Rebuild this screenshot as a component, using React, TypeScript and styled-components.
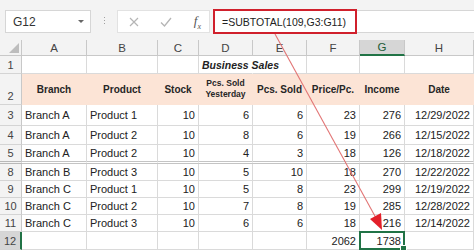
import React from "react";
import styled, { createGlobalStyle } from "styled-components";

const GlobalStyle = createGlobalStyle`
  body {
    margin: 0;
    background: #fff;
    font-family: "Liberation Sans", Arial, sans-serif;
  }
`;

const GREEN = "#217346";
const GRID = "#dadada";

const Page = styled.div`
  position: relative;
  width: 474px;
  height: 250px;
  overflow: hidden;
  background: #fff;
  color: #222;
`;

const Toolbar = styled.div`
  display: flex;
  align-items: flex-start;
  height: 40px;
  padding-top: 10px;
  box-sizing: border-box;
  background: #f3f3f3;
`;

const NameBox = styled.div`
  display: flex;
  align-items: center;
  justify-content: space-between;
  margin-left: 5px;
  width: 86px;
  height: 23px;
  box-sizing: border-box;
  padding: 0 6px 0 7px;
  background: #fff;
  border: 1px solid #d6d6d6;
  font-size: 12px;
  color: #333;
`;

const Caret = styled.span`
  width: 0;
  height: 0;
  border-left: 3px solid transparent;
  border-right: 3px solid transparent;
  border-top: 3px solid #666;
`;

const Grip = styled.div`
  width: 26px;
  display: flex;
  flex-direction: column;
  align-items: center;
  gap: 2px;
  padding-top: 7px;

  span {
    width: 1px;
    height: 1px;
    background: #a0a0a0;
  }
`;

const FxBox = styled.div`
  display: flex;
  align-items: center;
  justify-content: space-between;
  width: 93px;
  height: 23px;
  box-sizing: border-box;
  padding: 0 8px 0 11px;
  background: #fff;
  border: 1px solid #e2e2e2;
`;

const FxLabel = styled.span`
  font-family: "Liberation Serif", serif;
  font-style: italic;
  font-size: 13px;
  color: #555;

  sub {
    font-size: 8px;
  }
`;

const FormulaInput = styled.div`
  flex: 1;
  display: flex;
  margin-left: 3px;
  height: 23px;
  box-sizing: border-box;
  background: #fff;
  border: 1px solid #d6d6d6;
  border-right: none;
`;

const FormulaText = styled.span`
  display: inline-flex;
  align-items: center;
  height: 25px;
  box-sizing: border-box;
  margin: -2px 0 0 -1px;
  padding: 0 9px 0 7px;
  border: 2.5px solid #d0202c;
  font-size: 10.5px;
  color: #222;
`;

const Sheet = styled.div`
  display: grid;
  grid-template-columns: 22px 65px 71px 41px 54px 54px 53px 45px 69px;
  grid-template-rows: 16px 18px 31px 21px 19px 19px 17px 17px 17px 17px 18px;
  font-size: 11px;
`;

const Corner = styled.div`
  display: flex;
  align-items: flex-end;
  justify-content: flex-end;
  padding: 0 2px 2px 0;
  background: #f3f3f3;
  border-right: 1px solid #c8c8c8;
  border-bottom: 1px solid #c8c8c8;
  box-sizing: border-box;

  span {
    width: 0;
    height: 0;
    border-left: 10px solid transparent;
    border-bottom: 10px solid #bdbdbd;
  }
`;

const ColHead = styled.div<{ $active?: boolean }>`
  display: flex;
  align-items: center;
  justify-content: center;
  box-sizing: border-box;
  background: ${(p) => (p.$active ? "#d6d6d6" : "#f3f3f3")};
  color: ${(p) => (p.$active ? "#1d5c38" : "#444")};
  border-right: 1px solid #c8c8c8;
  border-bottom: ${(p) => (p.$active ? `2px solid ${GREEN}` : "1px solid #c8c8c8")};
  font-size: 11.5px;
`;

const RowHead = styled.div<{ $active?: boolean; $hiddenBelow?: boolean; $bottom?: boolean }>`
  display: flex;
  align-items: ${(p) => (p.$bottom ? "flex-end" : "center")};
  justify-content: center;
  padding-bottom: ${(p) => (p.$bottom ? "2px" : "0")};
  box-sizing: border-box;
  background: ${(p) => (p.$active ? "#d6d6d6" : "#f3f3f3")};
  color: #444;
  border-right: ${(p) => (p.$active ? `2px solid ${GREEN}` : "1px solid #c8c8c8")};
  border-bottom: ${(p) => (p.$hiddenBelow ? "3px double #b8b8b8" : "1px solid #d4d4d4")};
`;

const Cell = styled.div<{
  $align?: "left" | "right" | "center";
  $fill?: string;
  $spill?: boolean;
  $hiddenBelow?: boolean;
}>`
  display: flex;
  align-items: center;
  justify-content: ${(p) =>
    p.$align === "right" ? "flex-end" : p.$align === "center" ? "center" : "flex-start"};
  padding: 0 3px;
  box-sizing: border-box;
  white-space: nowrap;
  background: ${(p) => p.$fill ?? "transparent"};
  border-right: 1px solid ${(p) => (p.$spill ? "transparent" : p.$fill ?? GRID)};
  border-bottom: ${(p) => (p.$hiddenBelow ? "3px double #c4c4c4" : `1px solid ${p.$fill ?? GRID}`)};
`;

const HeadCell = styled(Cell)`
  font-weight: bold;
  font-size: 10px;
  color: #262626;
  text-align: center;
  line-height: 11px;
`;

const SmallHead = styled.span`
  font-size: 8.5px;
  line-height: 11px;
`;

const Title = styled.span`
  font-weight: bold;
  font-style: italic;
  font-size: 10.5px;
`;

const Selected = styled(Cell)`
  position: relative;

  &::after {
    content: "";
    position: absolute;
    inset: -1px -1px -1px -1px;
    border: 2px solid ${GREEN};
  }

  &::before {
    content: "";
    position: absolute;
    right: -3px;
    bottom: -3px;
    width: 5px;
    height: 5px;
    background: ${GREEN};
    border: 1px solid #fff;
    z-index: 1;
  }
`;

const Arrow = styled.svg`
  position: absolute;
  left: 0;
  top: 0;
  pointer-events: none;
`;

const PEACH = "#fce4d6";
const letters = ["A", "B", "C", "D", "E", "F", "G", "H"];
const aligns: ("left" | "right")[] = ["left", "left", "right", "right", "right", "right", "right", "right"];

const rows = [
  { n: "3", v: ["Branch A", "Product 1", "10", "6", "6", "23", "276", "12/29/2022"] },
  { n: "4", v: ["Branch A", "Product 2", "10", "8", "6", "19", "266", "12/15/2022"] },
  { n: "5", v: ["Branch A", "Product 2", "10", "4", "3", "18", "126", "12/18/2022"], hidden: true },
  { n: "8", v: ["Branch B", "Product 3", "10", "5", "10", "18", "270", "12/22/2022"] },
  { n: "9", v: ["Branch C", "Product 1", "10", "5", "8", "23", "299", "12/19/2022"] },
  { n: "10", v: ["Branch C", "Product 2", "10", "7", "8", "19", "285", "12/28/2022"] },
  { n: "11", v: ["Branch C", "Product 3", "10", "6", "6", "18", "216", "12/14/2022"] },
];

export default function App() {
  return (
    <Page>
      <GlobalStyle />
      <Toolbar>
        <NameBox>
          G12
          <Caret />
        </NameBox>
        <Grip>
          <span />
          <span />
          <span />
        </Grip>
        <FxBox>
          <svg width="10" height="10" viewBox="0 0 10 10">
            <path d="M1 1 L9 9 M9 1 L1 9" stroke="#b5b5b5" strokeWidth="1.2" fill="none" />
          </svg>
          <svg width="12" height="10" viewBox="0 0 12 10">
            <path d="M1 5.5 L4.5 9 L11 1" stroke="#b5b5b5" strokeWidth="1.3" fill="none" />
          </svg>
          <FxLabel>
            f<sub>x</sub>
          </FxLabel>
        </FxBox>
        <FormulaInput>
          <FormulaText>=SUBTOTAL(109,G3:G11)</FormulaText>
        </FormulaInput>
      </Toolbar>

      <Sheet>
        <Corner>
          <span />
        </Corner>
        {letters.map((l) => (
          <ColHead key={l} $active={l === "G"}>
            {l}
          </ColHead>
        ))}

        <RowHead>1</RowHead>
        <Cell />
        <Cell />
        <Cell />
        <Cell $spill>
          <Title>Business Sales</Title>
        </Cell>
        <Cell />
        <Cell />
        <Cell />
        <Cell />

        <RowHead $bottom>2</RowHead>
        <HeadCell $fill={PEACH} $align="center">Branch</HeadCell>
        <HeadCell $fill={PEACH} $align="center">Product</HeadCell>
        <HeadCell $fill={PEACH} $align="center">Stock</HeadCell>
        <HeadCell $fill={PEACH} $align="center">
          <SmallHead>
            Pcs. Sold
            <br />
            Yesterday
          </SmallHead>
        </HeadCell>
        <HeadCell $fill={PEACH} $align="center">Pcs. Sold</HeadCell>
        <HeadCell $fill={PEACH} $align="center">Price/Pc.</HeadCell>
        <HeadCell $fill={PEACH} $align="center">Income</HeadCell>
        <HeadCell $fill={PEACH} $align="center">Date</HeadCell>

        {rows.map((r) => (
          <React.Fragment key={r.n}>
            <RowHead $hiddenBelow={r.hidden}>{r.n}</RowHead>
            {r.v.map((v, i) => (
              <Cell key={i} $align={aligns[i]} $hiddenBelow={r.hidden}>
                {v}
              </Cell>
            ))}
          </React.Fragment>
        ))}

        <RowHead $active>12</RowHead>
        <Cell />
        <Cell />
        <Cell />
        <Cell />
        <Cell />
        <Cell $align="right">2062</Cell>
        <Selected $align="right">1738</Selected>
        <Cell />
      </Sheet>

      <Arrow width="474" height="250" viewBox="0 0 474 250">
        <line x1="275" y1="34" x2="376" y2="218" stroke="#e27575" strokeWidth="1.1" />
        <polygon points="382,230 370,219 381,213" fill="#e3202a" />
      </Arrow>
    </Page>
  );
}
